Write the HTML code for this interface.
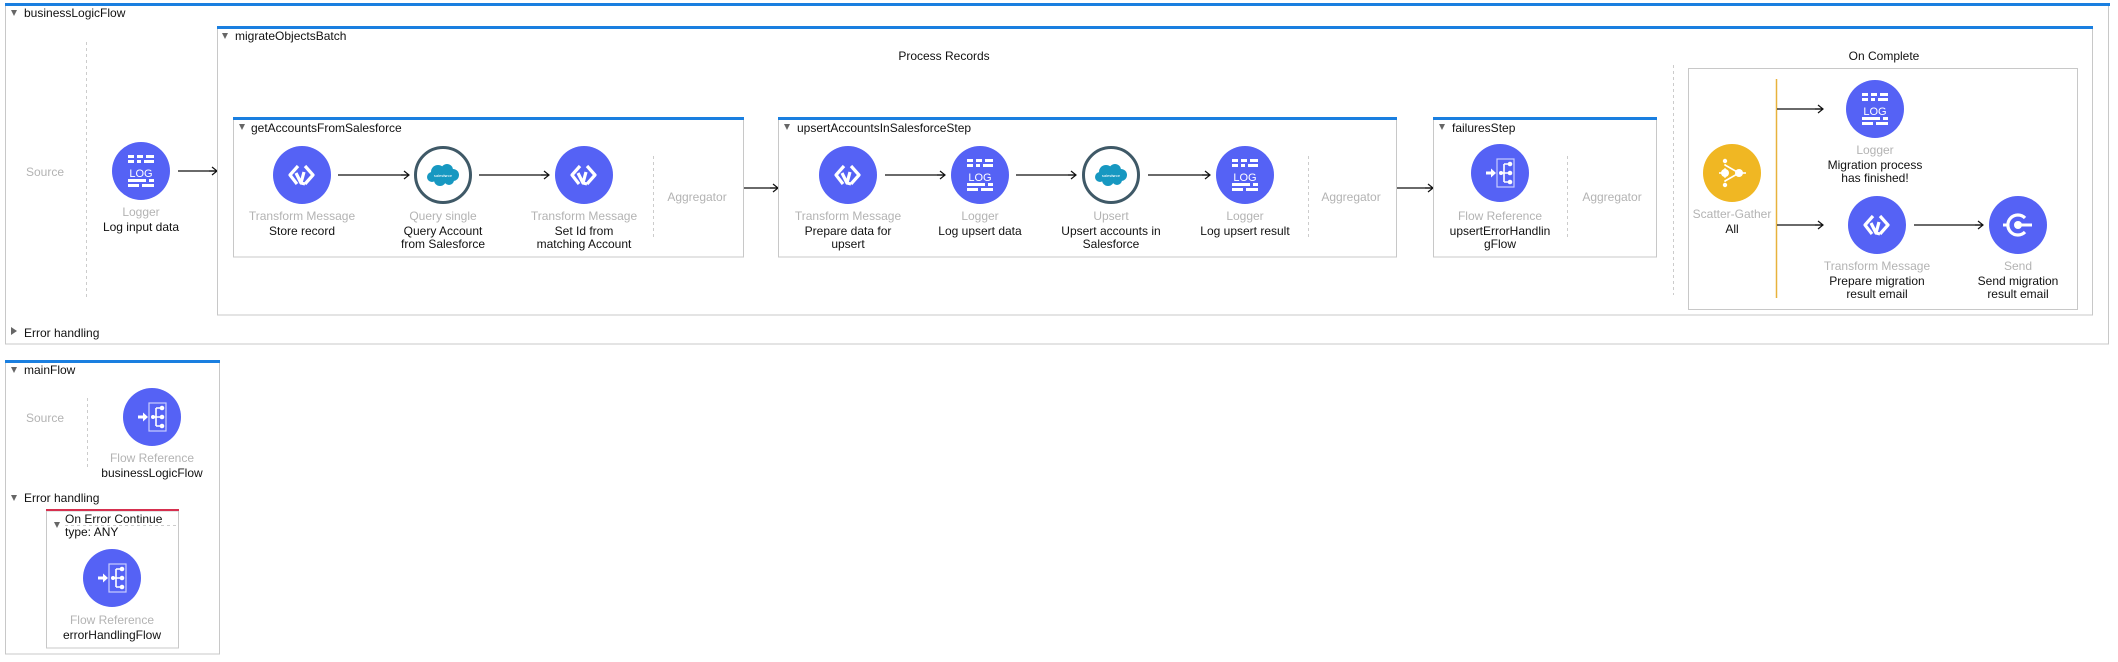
<!DOCTYPE html>
<html><head><meta charset="utf-8"><style>
html,body{margin:0;padding:0;background:#fff;}
svg{display:block;font-family:"Liberation Sans",sans-serif;}
.t{font-size:12px;fill:#111;}
.g{font-size:12px;fill:#b3b3b3;}
.h{font-size:12px;fill:#111;}
</style></head><body>
<svg width="2118" height="662" viewBox="0 0 2118 662" xmlns="http://www.w3.org/2000/svg">
<defs>
<g id="logI">
<circle r="29" fill="#5562f5"/>
<g fill="#fff">
<rect x="-13" y="-16" width="6" height="3"/><rect x="-4" y="-16" width="6" height="3"/><rect x="5" y="-16" width="8" height="3"/>
<rect x="-13" y="-11" width="6" height="3"/><rect x="-4" y="-11" width="4" height="3"/><rect x="3" y="-11" width="10" height="3"/>
<rect x="-13" y="8" width="18" height="3"/><rect x="8" y="8" width="5" height="3"/>
<rect x="-13" y="13" width="11" height="3"/><rect x="1" y="13" width="12" height="3"/>
</g>
</g>
<g id="trI">
<circle r="29" fill="#5562f5"/>
<path d="M-4,-9 L-12,0 L-5,9 M-6,-2 L-1,8 L2,-3 M3,-9 L11,0 L3,9 M-1,8 L3,9" stroke="#fff" stroke-width="3.2" fill="none" stroke-linejoin="round"/>
</g>
<g id="sfI">
<circle r="27.5" fill="#fff" stroke="#3f5967" stroke-width="3"/>
<g fill="#1798c1">
<circle cx="-5" cy="-3" r="7"/><circle cx="4" cy="-5" r="6"/><circle cx="10" cy="0" r="6"/>
<circle cx="-11" cy="2" r="5"/><circle cx="-3" cy="5" r="6"/><circle cx="6" cy="5" r="5"/>
</g>
</g>
<g id="frI">
<circle r="29" fill="#5562f5"/>
<rect x="-3" y="-14" width="17" height="28" fill="none" stroke="#c9ccff" stroke-width="1.2"/>
<path d="M-14,-1.5 h5 v-3 l5,4.5 -5,4.5 v-3 h-5z" fill="#fff"/>
<path d="M0,0 H4 M4,-9 V9 M4,-9 H9 M4,0 H9 M4,9 H9" stroke="#fff" stroke-width="1.6" fill="none"/>
<circle cx="1" cy="0" r="2" fill="#fff"/><circle cx="10" cy="-9" r="2.3" fill="#fff"/><circle cx="10" cy="0" r="2.3" fill="#fff"/><circle cx="10" cy="9" r="2.3" fill="#fff"/>
</g>
<g id="arr"><path d="M0,0 H-8 M-5,-4 L0,0 L-5,4" stroke="#111" stroke-width="1.2" fill="none"/></g>
</defs>

<!-- businessLogicFlow -->
<rect x="5.5" y="5" width="2103" height="339" fill="#fff" stroke="#c8c8c8"/>
<rect x="5" y="3" width="2105" height="3" fill="#1a7fe0"/>
<path d="M11,10 l6,0 -3,6z" fill="#666"/>
<text x="24" y="17" class="h">businessLogicFlow</text>
<text x="45" y="176" class="g" text-anchor="middle">Source</text>
<line x1="86.5" y1="42" x2="86.5" y2="300" stroke="#ccc" stroke-dasharray="3,3"/>
<use href="#logI" x="141" y="171"/><text x="141" y="177" font-size="11" fill="#fff" text-anchor="middle">LOG</text>
<text x="141" y="216" class="g" text-anchor="middle">Logger</text>
<text x="141" y="231" class="t" text-anchor="middle">Log input data</text>
<line x1="178" y1="171" x2="217" y2="171" stroke="#111" stroke-width="1.2"/><use href="#arr" x="217" y="171"/>
<path d="M11,327 l0,8 6,-4z" fill="#666"/>
<text x="24" y="337" class="h">Error handling</text>

<!-- migrateObjectsBatch -->
<rect x="217.5" y="28" width="1875" height="287" fill="#fff" stroke="#c8c8c8"/>
<rect x="217" y="26" width="1876" height="3" fill="#1a7fe0"/>
<path d="M222,33 l6,0 -3,6z" fill="#666"/>
<text x="235" y="40" class="h">migrateObjectsBatch</text>
<text x="944" y="60" class="h" text-anchor="middle">Process Records</text>

<!-- getAccounts -->
<rect x="233.5" y="119" width="510" height="138" fill="#fff" stroke="#c8c8c8"/>
<rect x="233" y="117" width="511" height="3" fill="#1a7fe0"/>
<path d="M239,124 l6,0 -3,6z" fill="#666"/>
<text x="251" y="132" class="h">getAccountsFromSalesforce</text>
<use href="#trI" x="302" y="175"/>
<line x1="338" y1="175" x2="409" y2="175" stroke="#111" stroke-width="1.2"/><use href="#arr" x="409" y="175"/>
<use href="#sfI" x="443" y="175"/><text x="443" y="177" font-size="4" fill="#fff" text-anchor="middle">salesforce</text>
<line x1="479" y1="175" x2="549" y2="175" stroke="#111" stroke-width="1.2"/><use href="#arr" x="549" y="175"/>
<use href="#trI" x="584" y="175"/>
<text x="302" y="220" class="g" text-anchor="middle">Transform Message</text>
<text x="302" y="235" class="t" text-anchor="middle">Store record</text>
<text x="443" y="220" class="g" text-anchor="middle">Query single</text>
<text x="443" y="235" class="t" text-anchor="middle">Query Account</text>
<text x="443" y="248" class="t" text-anchor="middle">from Salesforce</text>
<text x="584" y="220" class="g" text-anchor="middle">Transform Message</text>
<text x="584" y="235" class="t" text-anchor="middle">Set Id from</text>
<text x="584" y="248" class="t" text-anchor="middle">matching Account</text>
<line x1="653.5" y1="156" x2="653.5" y2="238" stroke="#ccc" stroke-dasharray="3,3"/>
<text x="697" y="201" class="g" text-anchor="middle">Aggregator</text>
<line x1="744" y1="188" x2="778" y2="188" stroke="#111" stroke-width="1.2"/><use href="#arr" x="778" y="188"/>

<!-- upsert -->
<rect x="778.5" y="119" width="618" height="138" fill="#fff" stroke="#c8c8c8"/>
<rect x="778" y="117" width="619" height="3" fill="#1a7fe0"/>
<path d="M784,124 l6,0 -3,6z" fill="#666"/>
<text x="797" y="132" class="h">upsertAccountsInSalesforceStep</text>
<use href="#trI" x="848" y="175"/>
<line x1="885" y1="175" x2="945" y2="175" stroke="#111" stroke-width="1.2"/><use href="#arr" x="945" y="175"/>
<use href="#logI" x="980" y="175"/><text x="980" y="181" font-size="11" fill="#fff" text-anchor="middle">LOG</text>
<line x1="1016" y1="175" x2="1076" y2="175" stroke="#111" stroke-width="1.2"/><use href="#arr" x="1076" y="175"/>
<use href="#sfI" x="1111" y="175"/><text x="1111" y="177" font-size="4" fill="#fff" text-anchor="middle">salesforce</text>
<line x1="1148" y1="175" x2="1210" y2="175" stroke="#111" stroke-width="1.2"/><use href="#arr" x="1210" y="175"/>
<use href="#logI" x="1245" y="175"/><text x="1245" y="181" font-size="11" fill="#fff" text-anchor="middle">LOG</text>
<text x="848" y="220" class="g" text-anchor="middle">Transform Message</text>
<text x="848" y="235" class="t" text-anchor="middle">Prepare data for</text>
<text x="848" y="248" class="t" text-anchor="middle">upsert</text>
<text x="980" y="220" class="g" text-anchor="middle">Logger</text>
<text x="980" y="235" class="t" text-anchor="middle">Log upsert data</text>
<text x="1111" y="220" class="g" text-anchor="middle">Upsert</text>
<text x="1111" y="235" class="t" text-anchor="middle">Upsert accounts in</text>
<text x="1111" y="248" class="t" text-anchor="middle">Salesforce</text>
<text x="1245" y="220" class="g" text-anchor="middle">Logger</text>
<text x="1245" y="235" class="t" text-anchor="middle">Log upsert result</text>
<line x1="1308.5" y1="156" x2="1308.5" y2="238" stroke="#ccc" stroke-dasharray="3,3"/>
<text x="1351" y="201" class="g" text-anchor="middle">Aggregator</text>
<line x1="1397" y1="188" x2="1433" y2="188" stroke="#111" stroke-width="1.2"/><use href="#arr" x="1433" y="188"/>

<!-- failuresStep -->
<rect x="1433.5" y="119" width="223" height="138" fill="#fff" stroke="#c8c8c8"/>
<rect x="1433" y="117" width="224" height="3" fill="#1a7fe0"/>
<path d="M1439,124 l6,0 -3,6z" fill="#666"/>
<text x="1452" y="132" class="h">failuresStep</text>
<use href="#frI" x="1500" y="173"/>
<text x="1500" y="220" class="g" text-anchor="middle">Flow Reference</text>
<text x="1500" y="235" class="t" text-anchor="middle">upsertErrorHandlin</text>
<text x="1500" y="248" class="t" text-anchor="middle">gFlow</text>
<line x1="1567.5" y1="156" x2="1567.5" y2="238" stroke="#ccc" stroke-dasharray="3,3"/>
<text x="1612" y="201" class="g" text-anchor="middle">Aggregator</text>

<line x1="1673.5" y1="65" x2="1673.5" y2="295" stroke="#ccc" stroke-dasharray="3,3"/>
<text x="1884" y="60" class="h" text-anchor="middle">On Complete</text>
<rect x="1688.5" y="68.5" width="389" height="241" fill="#fff" stroke="#c8c8c8"/>
<circle cx="1732" cy="173" r="29" fill="#f0b723"/>
<g transform="translate(1732,173)" fill="#fff" stroke="#fff">
<path d="M-7,-8 L7,0 L-7,8" stroke-width="1.6" fill="none"/>
<line x1="-7" y1="-13" x2="-7" y2="13" stroke-width="1.2" stroke-dasharray="2,2"/>
<circle cx="-7" cy="-12" r="2.2" stroke="none"/><circle cx="-7" cy="12" r="2.2" stroke="none"/>
<circle cx="-7" cy="0" r="4" stroke="none"/><circle cx="7" cy="0" r="4" stroke="none"/>
<line x1="-13" y1="0" x2="-10" y2="0" stroke-width="1.6"/><line x1="10" y1="0" x2="14" y2="0" stroke-width="1.6"/>
</g>
<text x="1732" y="218" class="g" text-anchor="middle">Scatter-Gather</text>
<text x="1732" y="233" class="t" text-anchor="middle">All</text>
<line x1="1776.5" y1="79" x2="1776.5" y2="298" stroke="#e8b23c" stroke-width="1.5"/>
<line x1="1777" y1="109" x2="1823" y2="109" stroke="#111" stroke-width="1.2"/><use href="#arr" x="1823" y="109"/>
<line x1="1777" y1="225" x2="1823" y2="225" stroke="#111" stroke-width="1.2"/><use href="#arr" x="1823" y="225"/>
<use href="#logI" x="1875" y="109"/><text x="1875" y="115" font-size="11" fill="#fff" text-anchor="middle">LOG</text>
<text x="1875" y="154" class="g" text-anchor="middle">Logger</text>
<text x="1875" y="169" class="t" text-anchor="middle">Migration process</text>
<text x="1875" y="182" class="t" text-anchor="middle">has finished!</text>
<use href="#trI" x="1877" y="225"/>
<text x="1877" y="270" class="g" text-anchor="middle">Transform Message</text>
<text x="1877" y="285" class="t" text-anchor="middle">Prepare migration</text>
<text x="1877" y="298" class="t" text-anchor="middle">result email</text>
<line x1="1914" y1="225" x2="1983" y2="225" stroke="#111" stroke-width="1.2"/><use href="#arr" x="1983" y="225"/>
<circle cx="2018" cy="225" r="29" fill="#5562f5"/>
<g transform="translate(2018,225)">
<path d="M7,-7 A10,10 0 1 0 7,7" stroke="#fff" stroke-width="3.2" fill="none"/>
<circle cx="0" cy="0" r="4" fill="#fff"/>
<rect x="0" y="-1.5" width="14" height="3" fill="#fff"/>
<rect x="-15" y="-1.5" width="4" height="3" fill="#fff"/>
</g>
<text x="2018" y="270" class="g" text-anchor="middle">Send</text>
<text x="2018" y="285" class="t" text-anchor="middle">Send migration</text>
<text x="2018" y="298" class="t" text-anchor="middle">result email</text>

<!-- mainFlow -->
<rect x="5.5" y="362" width="214" height="292" fill="#fff" stroke="#c8c8c8"/>
<rect x="5" y="360" width="215" height="3" fill="#1a7fe0"/>
<path d="M11,367 l6,0 -3,6z" fill="#666"/>
<text x="24" y="374" class="h">mainFlow</text>
<text x="45" y="422" class="g" text-anchor="middle">Source</text>
<line x1="87.5" y1="398" x2="87.5" y2="467" stroke="#ccc" stroke-dasharray="3,3"/>
<use href="#frI" x="152" y="417"/>
<text x="152" y="462" class="g" text-anchor="middle">Flow Reference</text>
<text x="152" y="477" class="t" text-anchor="middle">businessLogicFlow</text>
<path d="M11,495 l6,0 -3,6z" fill="#666"/>
<text x="24" y="502" class="h">Error handling</text>
<rect x="46.5" y="511" width="132" height="137" fill="#fff" stroke="#c8c8c8"/>
<rect x="46" y="509" width="133" height="2" fill="#d6304f"/>
<path d="M54,522 l6,0 -3,6z" fill="#666"/>
<line x1="65" y1="525.5" x2="178" y2="525.5" stroke="#ccc" stroke-dasharray="3,3"/>
<text x="65" y="523" class="h">On Error Continue</text>
<text x="65" y="536" class="h">type: ANY</text>
<use href="#frI" x="112" y="578"/>
<text x="112" y="624" class="g" text-anchor="middle">Flow Reference</text>
<text x="112" y="639" class="t" text-anchor="middle">errorHandlingFlow</text>
</svg>
</body></html>
